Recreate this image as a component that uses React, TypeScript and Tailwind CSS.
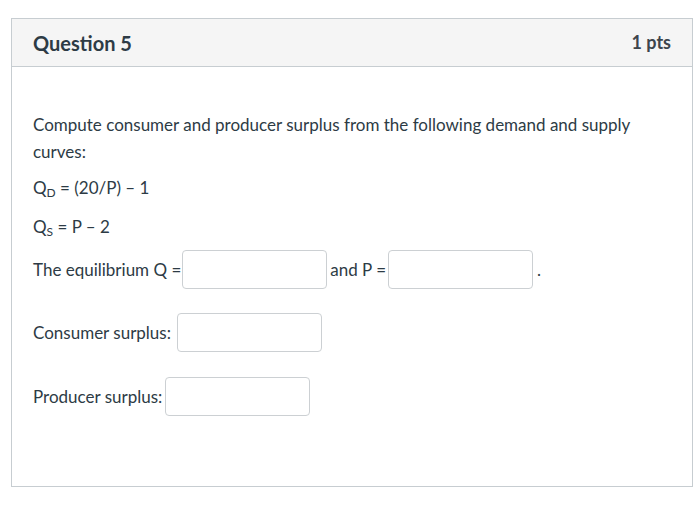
export default function App() {
  return (
    <div className="min-h-[529px] w-[700px] bg-white pt-[18px] pl-[11px] font-['Lato',sans-serif] text-[#2d3b45]">
      <div className="w-[682px] border border-[#c7cdd1]">
        <div className="flex h-[48px] items-center justify-between border-b border-[#c7cdd1] bg-[#f5f5f5] px-[21px]">
          <h2 className="text-[20px] font-bold">Question 5</h2>
          <span className="text-[18px] font-bold text-[#3d454c]">1 pts</span>
        </div>
        <div className="px-[21px] pt-[44px] pb-[70px] text-[17px]">
          <p className="max-w-[600px] leading-[27px]">
            Compute consumer and producer surplus from the following demand and supply curves:
          </p>
          <p className="mt-[9px] leading-[27px]">
            Q<sub className="text-[12px]">D</sub> = (20/P) – 1
          </p>
          <p className="mt-[12px] leading-[27px]">
            Q<sub className="text-[12px]">S</sub> = P – 2
          </p>
          <div className="mt-[10px] flex items-center">
            <span>The equilibrium Q =</span>
            <input className="ml-[1px] h-[39px] w-[145px] rounded-[4px] border border-[#ccd0d3] outline-none" />
            <span className="ml-[3px]">and P =</span>
            <input className="ml-[2px] h-[39px] w-[145px] rounded-[4px] border border-[#ccd0d3] outline-none" />
            <span className="ml-[4px]">.</span>
          </div>
          <div className="mt-[24px] flex items-center">
            <span>Consumer surplus:</span>
            <input className="ml-[6px] h-[39px] w-[145px] rounded-[4px] border border-[#ccd0d3] outline-none" />
          </div>
          <div className="mt-[25px] flex items-center">
            <span>Producer surplus:</span>
            <input className="ml-[3px] h-[39px] w-[145px] rounded-[4px] border border-[#ccd0d3] outline-none" />
          </div>
        </div>
      </div>
    </div>
  )
}
